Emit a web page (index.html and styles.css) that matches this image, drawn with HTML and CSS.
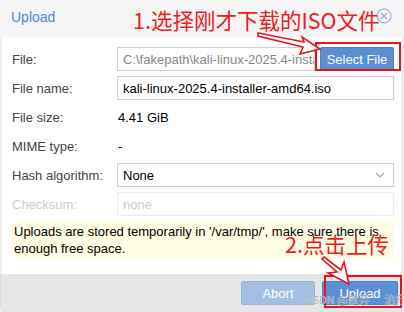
FILE: index.html
```html
<!DOCTYPE html>
<html lang="en">
<head>
    <meta charset="UTF-8">
    <title>Upload</title>
    <link rel="stylesheet" href="styles.css">
</head>
<body>
    <div class="dialog">
        <div class="dialog-header">
            <span class="dialog-title">Upload</span>
            <span class="close">
                <svg width="16" height="16" viewBox="0 0 16 16">
                    <circle cx="8" cy="8" r="7" fill="none" stroke="#8fa9cf" stroke-width="1.1"/>
                    <path d="M5 5 L11 11 M11 5 L5 11" stroke="#8fa9cf" stroke-width="1.1"/>
                </svg>
            </span>
        </div>

        <div class="dialog-body">
            <div class="row">
                <label class="label">File:</label>
                <div class="field">
                    <div class="input readonly">C:\fakepath\kali-linux-2025.4-installer-amd64.iso</div>
                    <button class="btn">Select File</button>
                </div>
            </div>
            <div class="row">
                <label class="label">File name:</label>
                <div class="input">kali-linux-2025.4-installer-amd64.iso</div>
            </div>
            <div class="row">
                <label class="label">File size:</label>
                <span class="value">4.41 GiB</span>
            </div>
            <div class="row">
                <label class="label">MIME type:</label>
                <span class="value">-</span>
            </div>
            <div class="row">
                <label class="label">Hash algorithm:</label>
                <div class="input select">
                    <span>None</span>
                    <svg width="10" height="6" viewBox="0 0 10 6">
                        <path d="M1 1 L5 5 L9 1" fill="none" stroke="#aaa" stroke-width="1.2"/>
                    </svg>
                </div>
            </div>
            <div class="row disabled">
                <label class="label">Checksum:</label>
                <div class="input">none</div>
            </div>

            <div class="note">
                Uploads are stored temporarily in '/var/tmp/', make sure there is enough free space.
            </div>
        </div>

        <div class="dialog-footer">
            <button class="btn btn-disabled">Abort</button>
            <button class="btn btn-upload">Upload</button>
        </div>

        <!-- annotations drawn over the screenshot -->
        <div class="tip tip-1">1.选择刚才下载的ISO文件</div>
        <div class="tip tip-2">2.点击上传</div>
        <svg class="marks" width="404" height="312" viewBox="0 0 404 312">
            <rect x="316" y="43" width="84" height="27" fill="none" stroke="#e8141c" stroke-width="2"/>
            <rect x="325" y="276" width="76" height="31" fill="none" stroke="#e8141c" stroke-width="2"/>
            <polygon points="258,33 304,42 302,37 320,49 300,54 303,47 258,36" fill="#fff" stroke="#e8141c" stroke-width="1.6" stroke-linejoin="miter"/>
            <polygon points="324,257 341,270 344,262 349,284 328,273 337,272 322,259" fill="#fff" stroke="#e8141c" stroke-width="1.6"/>
        </svg>
        <div class="watermark">CSDN @放弃&nbsp;&nbsp;&nbsp;&nbsp;&nbsp;&nbsp;治疗</div>
    </div>
</body>
</html>
```

FILE: styles.css
```css
/* Upload dialog */
body {
    margin: 0;
    padding: 0;
    font-family: "Liberation Sans", Arial, sans-serif;
    font-size: 13px;
    background-color: #f5f5f5;
}

.dialog {
    position: relative;
    width: 404px;
    height: 312px;
    display: flex;
    flex-direction: column;
    overflow: hidden;
}

.dialog-header {
    height: 37px;
    background-color: #f5f5f5;
    display: flex;
    align-items: center;
    justify-content: space-between;
    padding: 0 12px 3px 11px;
    box-sizing: border-box;
}

.dialog-title {
    color: #4e8ad5;
    font-size: 14px;
}

.close {
    display: flex;
    margin-top: -2px;
}

.dialog-body {
    flex: 1;
    background-color: #fff;
    border-left: 2px solid #eeeeee;
    border-right: 3px solid #eeeeee;
    padding: 10px 7px 0 10px;
}

.row {
    display: flex;
    align-items: center;
    height: 24px;
    margin-bottom: 5px;
}

.label {
    width: 105px;
    flex-shrink: 0;
    color: #444;
}

.field {
    flex: 1;
    min-width: 0;
    display: flex;
    gap: 5px;
}

.input {
    flex: 1;
    height: 24px;
    box-sizing: border-box;
    border: 1px solid #cfcfcf;
    padding: 0 5px;
    display: flex;
    align-items: center;
    color: #000;
    white-space: nowrap;
    overflow: hidden;
    min-width: 0;
}

.input.readonly {
    color: #888;
}

.select {
    justify-content: space-between;
    padding-right: 8px;
}

.value {
    color: #000;
    padding-left: 1px;
}

.disabled .label {
    color: #cccccc;
}

.disabled .input {
    border-color: #ececec;
    color: #cccccc;
}

.btn {
    height: 24px;
    border: 1px solid #4f80c2;
    border-radius: 2px;
    background-color: #5a8fd4;
    color: #fff;
    font-family: "Liberation Sans", Arial, sans-serif;
    font-size: 13px;
    padding: 0;
    width: 74px;
    flex-shrink: 0;
}

.note {
    background-color: #fffde3;
    color: #000;
    line-height: 17px;
    padding: 2px;
}

.dialog-footer {
    height: 38px;
    background-color: #e6e6e6;
    display: flex;
    justify-content: flex-end;
    align-items: flex-start;
    gap: 7px;
    padding: 7px 6px 0 0;
    box-sizing: border-box;
    border-left: 1px solid #dcdcdc;
    border-radius: 0 0 0 4px;
}

.btn-disabled {
    width: 74px;
    background-color: #a5bfe2;
    border-color: #9db6d8;
}

.btn-upload {
    width: 76px;
}

/* red annotations */
.tip {
    position: absolute;
    color: #ee1c1c;
    font-family: "Noto Sans CJK SC", sans-serif;
    font-size: 21.5px;
    line-height: 24px;
    white-space: nowrap;
}

.tip-1 {
    left: 133px;
    top: 8px;
}

.tip-2 {
    left: 285px;
    top: 232px;
}

.marks {
    position: absolute;
    left: 0;
    top: 0;
}

.watermark {
    position: absolute;
    left: 306px;
    top: 291px;
    font-family: "Noto Sans CJK SC", sans-serif;
    font-size: 11px;
    color: rgba(165, 165, 165, 0.9);
    text-shadow: 0 0 1px rgba(255, 255, 255, 0.8);
    white-space: nowrap;
}
```
